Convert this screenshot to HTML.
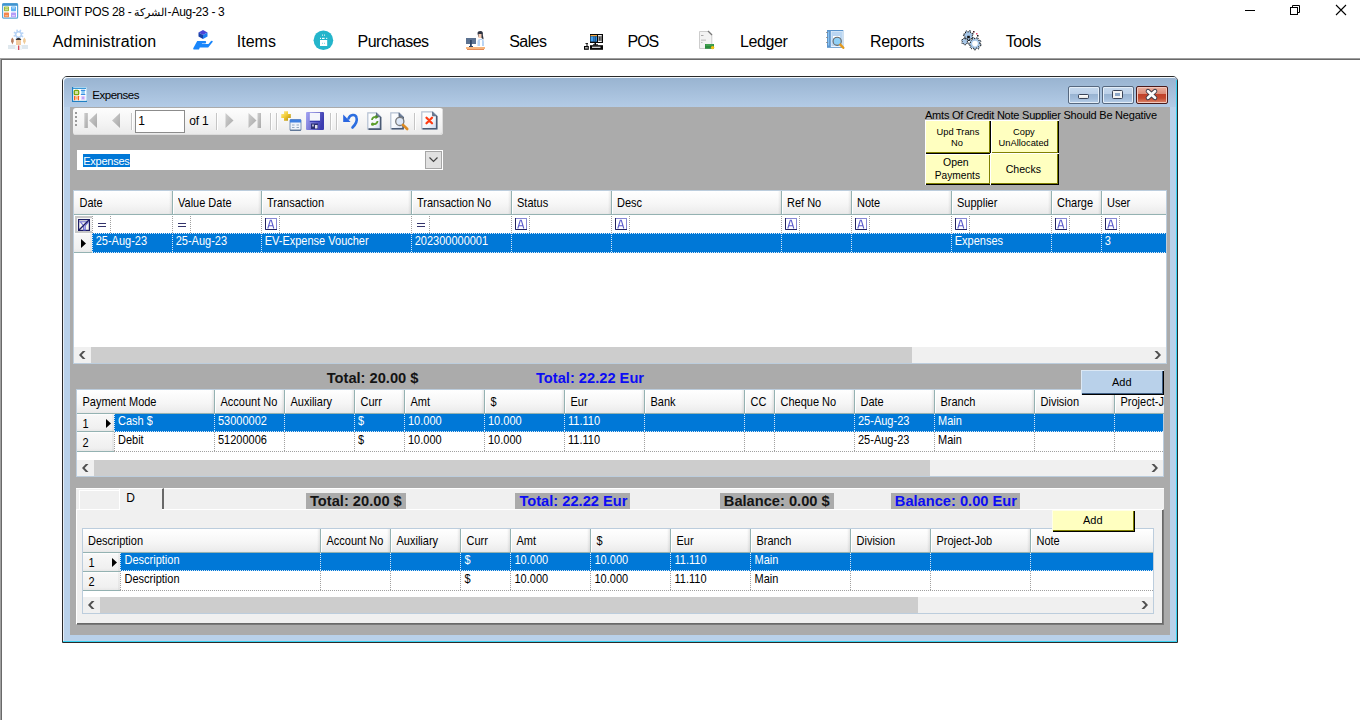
<!DOCTYPE html><html><head><meta charset="utf-8"><style>
*{margin:0;padding:0;box-sizing:border-box}
html,body{width:1360px;height:720px;overflow:hidden;background:#fff}
body{position:relative;font-family:"Liberation Sans",sans-serif;font-size:11px;color:#000}
.a{position:absolute}
.t{position:absolute;white-space:nowrap;line-height:1}
svg{position:absolute;overflow:visible}
.hd{position:absolute;background:linear-gradient(#ffffff 0%,#f7f7f7 50%,#ececec 100%);}
</style></head><body><svg style="left:2px;top:3px" width="17" height="16" viewBox="0 0 17 16">
<rect x="0.6" y="0.6" width="15" height="14.6" rx="1" fill="#fff" stroke="#5aa6d6" stroke-width="1.2"/>
<rect x="0.6" y="0.6" width="15" height="2.2" fill="#3f93d0"/>
<rect x="2" y="3.4" width="5" height="4.8" rx="0.6" fill="#9bba3c"/><rect x="3" y="4.4" width="3" height="1" fill="#d8e8a8"/><rect x="3" y="6.2" width="3" height="1" fill="#d8e8a8"/>
<rect x="9" y="3.4" width="5" height="4.8" rx="0.6" fill="#5fb2f2"/><rect x="10" y="4.4" width="3" height="1" fill="#c8e6fc"/>
<rect x="2" y="9.4" width="5" height="4.8" rx="0.6" fill="#f4854c"/><rect x="3" y="12" width="3" height="1.4" fill="#f2b888"/>
<rect x="9" y="9.4" width="5" height="4.8" rx="0.6" fill="#b49cf8"/><rect x="10" y="12" width="3" height="1.4" fill="#dccdfc"/>
</svg>
<div class="t" style="left:23px;top:6.34px;font-size:12px;letter-spacing:-0.3px;">BILLPOINT POS 28 - <span dir="rtl" style="font-size:11px">الشركة</span>-Aug-23 - 3</div>
<div class="a" style="left:1245px;top:10px;width:10px;height:1px;background:#000"></div>
<svg style="left:1289px;top:4px" width="12" height="12" viewBox="0 0 12 12">
<rect x="1.5" y="3.5" width="7" height="7" fill="none" stroke="#000"/>
<path d="M3.5 3.5 V1.5 H10.5 V8.5 H8.5" fill="none" stroke="#000"/></svg>
<svg style="left:1335px;top:4px" width="12" height="12" viewBox="0 0 12 12">
<path d="M1 1 L11 11 M11 1 L1 11" stroke="#000" stroke-width="1.1"/></svg>
<div class="t" style="left:52.8px;top:34.15px;font-size:16px;letter-spacing:0.15px;">Administration</div>
<div class="t" style="left:236.8px;top:34.15px;font-size:16px;letter-spacing:0px;">Items</div>
<div class="t" style="left:357.5px;top:34.15px;font-size:16px;letter-spacing:-0.5px;">Purchases</div>
<div class="t" style="left:509.3px;top:34.15px;font-size:16px;letter-spacing:-0.6px;">Sales</div>
<div class="t" style="left:627.5px;top:34.15px;font-size:16px;letter-spacing:-1.0px;">POS</div>
<div class="t" style="left:740px;top:34.15px;font-size:16px;letter-spacing:-0.4px;">Ledger</div>
<div class="t" style="left:869.9px;top:34.15px;font-size:16px;letter-spacing:-0.25px;">Reports</div>
<div class="t" style="left:1005.8px;top:34.15px;font-size:16px;letter-spacing:-0.5px;">Tools</div>
<svg style="left:4px;top:26px" width="30" height="28" viewBox="0 0 30 28">
<path d="M18.03,9.22 L19.44,10.12 L18.81,11.40 L17.23,10.85 L16.49,11.50 L16.84,13.14 L15.50,13.60 L14.77,12.09 L13.78,12.03 L12.88,13.44 L11.60,12.81 L12.15,11.23 L11.50,10.49 L9.86,10.84 L9.40,9.50 L10.91,8.77 L10.97,7.78 L9.56,6.88 L10.19,5.60 L11.77,6.15 L12.51,5.50 L12.16,3.86 L13.50,3.40 L14.23,4.91 L15.22,4.97 L16.12,3.56 L17.40,4.19 L16.85,5.77 L17.50,6.51 L19.14,6.16 L19.60,7.50 L18.09,8.23Z" fill="#b8d4f6"/>
<circle cx="14.5" cy="8.5" r="2" fill="#fff"/>
<path d="M11.8 13.5 Q14.5 10 17.2 13.5 V14 H11.8Z" fill="#3a3434"/>
<rect x="12" y="14" width="5" height="5" fill="#f2caa0"/>
<path d="M8.3 11.5 Q6.8 13 7 15.5 Q8 17 8.3 18.5 Q9 17 9.8 15.5 Q10.2 13 8.3 11.5Z" fill="#b98062"/>
<path d="M20.3 11.5 Q18.8 13 19 15.5 Q20 17 20.3 18.5 Q21 17 21.8 15.5 Q22.2 13 20.3 11.5Z" fill="#f1cc98"/>
<rect x="4" y="19" width="8" height="4" fill="#dfe8ee"/><rect x="17" y="19" width="7" height="4" fill="#dfe8ee"/>
<rect x="11" y="19.5" width="7" height="4.5" fill="#f2f6f8"/>
<rect x="14" y="19.5" width="1.3" height="4.5" fill="#d84a5a"/>
</svg>
<svg style="left:188px;top:26px" width="30" height="28" viewBox="0 0 30 28">
<path d="M15 4 L19.5 6.5 L15 9 L10.5 6.5Z" fill="#4a46d6"/>
<path d="M10.5 6.5 L15 9 L15 13 L10.5 10.5Z" fill="#1840a8"/>
<path d="M15 9 L19.5 6.5 L19.5 10.5 L15 13Z" fill="#1e7ef0"/>
<path d="M9.2 15 H17.6 Q18.8 15.8 17.6 17.4 H14 L13.8 18 H20.5 L23 15 Q24.6 14.3 24.8 15.8 L20.2 21.4 H11.8 L11 23.6 H5.6 Q4.8 22.6 5.4 22Z" fill="#1a86fb"/>
</svg>
<svg style="left:308px;top:26px" width="30" height="28" viewBox="0 0 30 28">
<circle cx="15.4" cy="14.2" r="9.8" fill="#24b5cb"/>
<rect x="12" y="14" width="7.2" height="6" fill="#fff"/>
<rect x="14" y="11.8" width="2.6" height="1.2" fill="#fff"/><rect x="12" y="11.8" width="1" height="1.2" fill="#fff"/><rect x="18.2" y="11.8" width="1" height="1.2" fill="#fff"/>
<rect x="14" y="8.6" width="1" height="1" fill="#fff"/><rect x="16" y="8.6" width="1" height="1" fill="#fff"/>
<rect x="14" y="16.8" width="1" height="1" fill="#7fd2de"/><rect x="16" y="16.8" width="1" height="1" fill="#7fd2de"/>
</svg>
<svg style="left:460px;top:26px" width="30" height="28" viewBox="0 0 30 28">
<rect x="6" y="12" width="10" height="6" fill="#5b7291"/>
<rect x="10" y="14" width="1.8" height="6.5" fill="#2e4566"/><rect x="9" y="20" width="4" height="1" fill="#2e4566"/>
<path d="M17.6 8 Q17 5 20.5 5 Q23.5 5.2 22.8 9 Q23.6 12 23.5 13.5 L21.5 12 Q20 11.5 18.5 11 Z" fill="#2f3442"/>
<rect x="18.5" y="8" width="3" height="4" fill="#f7cdb4"/>
<path d="M17.5 20 L17.5 15 Q18 13.2 20 13 L22 13 Q24 13.5 24 15.5 L24 20Z" fill="#b8d4f4"/>
<rect x="20" y="14" width="2" height="6" fill="#fff"/>
<rect x="6" y="21" width="19" height="2" fill="#f7b57c"/><rect x="7" y="23" width="17" height="1" fill="#e48a56"/>
</svg>
<svg style="left:578px;top:26px" width="30" height="28" viewBox="0 0 30 28">
<rect x="12" y="8" width="13" height="9" fill="#060606"/>
<rect x="12.5" y="9" width="6.5" height="1.4" fill="#f6a63a"/><rect x="12.5" y="10.4" width="6.5" height="5.2" fill="#3e9ef0"/>
<rect x="15.6" y="10.4" width="0.7" height="5.2" fill="#0a2a50"/><rect x="17.4" y="10.4" width="0.7" height="5.2" fill="#0a2a50"/>
<rect x="20" y="9" width="3.8" height="1.4" fill="#eee"/><rect x="20.3" y="10.4" width="1" height="4.5" fill="#ddd"/><rect x="22.5" y="10.4" width="1" height="4.5" fill="#ddd"/><rect x="20" y="14.8" width="3.8" height="1.2" fill="#eee"/>
<rect x="16.5" y="17" width="1.5" height="2" fill="#060606"/><rect x="15" y="18.3" width="5" height="1" fill="#060606"/>
<rect x="12" y="19.2" width="13" height="4.6" fill="#060606"/><rect x="14" y="20.6" width="8.5" height="1.4" fill="#cfcfcf"/>
<rect x="6" y="20" width="4.8" height="3.8" fill="#060606"/><rect x="7" y="21" width="2.8" height="1.6" fill="#aaa"/>
<rect x="7.5" y="17" width="2.5" height="0.9" fill="#060606"/><rect x="8.5" y="18" width="1" height="2" fill="#060606"/>
</svg>
<svg style="left:692px;top:26px" width="30" height="28" viewBox="0 0 30 28">
<path d="M7.5 5.5 H16.5 L19.8 8.5 V22.5 H7.5Z" fill="#f3f3f3" stroke="#cdcdcd" stroke-width="1"/>
<path d="M16 5 L20 9" stroke="#777" stroke-width="1.3"/>
<rect x="9" y="9" width="2.5" height="1" fill="#aaa"/><rect x="9" y="13.6" width="5" height="1" fill="#b8b8b8"/><rect x="9" y="16" width="1.5" height="1" fill="#bbb"/>
<rect x="13" y="18" width="9" height="4.8" fill="#2a8c3c"/><rect x="13.5" y="18.5" width="8" height="1" fill="#56b060"/>
<circle cx="20.6" cy="21.6" r="1.7" fill="#f5c010"/>
</svg>
<svg style="left:822px;top:26px" width="30" height="28" viewBox="0 0 30 28">
<rect x="5" y="4" width="16.3" height="17.8" fill="#5a94cc"/>
<rect x="8.8" y="5" width="12" height="16" fill="#e8f3fd"/><rect x="9.5" y="5.5" width="10.5" height="14.5" fill="#bad6f2"/>
<rect x="6" y="5.5" width="1.2" height="14" fill="#8cc2ee"/>
<rect x="4" y="6" width="2" height="0.8" fill="#888"/><rect x="4" y="11" width="2" height="0.8" fill="#888"/><rect x="4" y="16" width="2" height="0.8" fill="#888"/>
<rect x="11" y="10" width="7" height="2" fill="#fff"/>
<circle cx="15.2" cy="15.3" r="4.1" fill="#8fd0f6" stroke="#6a6a6a" stroke-width="1.1"/>
<path d="M18.3 18.6 L21.3 21.8" stroke="#e59a1e" stroke-width="2.4" stroke-linecap="round"/>
</svg>
<svg style="left:956px;top:26px" width="30" height="28" viewBox="0 0 30 28">
<path d="M15.84,10.56 L16.94,11.61 L16.06,12.90 L14.68,12.28 L13.71,12.85 L13.58,14.36 L12.02,14.49 L11.65,13.02 L10.60,12.62 L9.34,13.45 L8.27,12.31 L9.18,11.11 L8.84,10.03 L7.40,9.57 L7.62,8.02 L9.13,7.98 L9.76,7.05 L9.23,5.64 L10.58,4.84 L11.55,6.00 L12.67,5.91 L13.44,4.61 L14.90,5.17 L14.60,6.65 L15.38,7.47 L16.87,7.27 L17.34,8.76 L16.00,9.45Z" fill="#a7c7e8" stroke="#111" stroke-width="1" stroke-dasharray="1.6 0.9"/>
<rect x="11.2" y="9.8" width="2.6" height="2.4" fill="#111"/>
<path d="M11.39,15.76 L12.09,16.36 L11.56,17.49 L10.65,17.33 L9.87,17.87 L9.70,18.78 L8.46,18.88 L8.14,18.01 L7.28,17.61 L6.41,17.92 L5.70,16.90 L6.29,16.18 L6.21,15.24 L5.51,14.64 L6.04,13.51 L6.95,13.67 L7.73,13.13 L7.90,12.22 L9.14,12.12 L9.46,12.99 L10.32,13.39 L11.19,13.08 L11.90,14.10 L11.31,14.82Z" fill="#a7c7e8" stroke="#111" stroke-width="1" stroke-dasharray="1.4 0.9"/>
<path d="M23.80,17.60 L25.27,18.26 L24.92,19.75 L23.31,19.70 L22.68,20.69 L23.38,22.13 L22.15,23.06 L20.95,21.99 L19.83,22.33 L19.44,23.88 L17.91,23.80 L17.68,22.21 L16.60,21.76 L15.30,22.70 L14.17,21.65 L15.02,20.28 L14.49,19.24 L12.89,19.12 L12.70,17.60 L14.23,17.10 L14.49,15.96 L13.34,14.84 L14.17,13.55 L15.67,14.15 L16.60,13.44 L16.44,11.84 L17.91,11.40 L18.67,12.81 L19.83,12.87 L20.74,11.54 L22.15,12.14 L21.82,13.72 L22.68,14.51 L24.22,14.08 L24.92,15.45 L23.66,16.44Z" fill="#a7c7e8" stroke="#111" stroke-width="1" stroke-dasharray="1.6 1"/>
<circle cx="19" cy="17.6" r="2.8" fill="#fff"/>
<rect x="17" y="5" width="1.5" height="1.5" fill="#111"/><rect x="17.4" y="5.6" width="0.8" height="0.8" fill="#e04a6a"/>
<rect x="20" y="7" width="1.5" height="1.5" fill="#e04a6a"/><rect x="21" y="9" width="1.5" height="1.5" fill="#111"/>
</svg>
<div class="a" style="left:0px;top:58px;width:1360px;height:1px;background:#a0a0a0"></div>
<div class="a" style="left:0px;top:58px;width:1px;height:662px;background:#a0a0a0"></div>
<div class="a" style="left:1px;top:59px;width:1359px;height:1px;background:#696969"></div>
<div class="a" style="left:1px;top:59px;width:1px;height:661px;background:#696969"></div>
<div class="a" style="left:62px;top:76px;width:1116px;height:567px;background:#b9d1ea;border:1px solid #2a2a2a;border-radius:5px 5px 0 0"></div>
<div class="a" style="left:63px;top:77px;width:1114px;height:30px;background:linear-gradient(#98b3d0,#b3cbe6);border-radius:4px 4px 0 0;box-shadow:inset 1px 1px 0 #f4f8fc"></div>
<div class="a" style="left:63px;top:90px;width:1px;height:551px;background:#e6eef7"></div>
<div class="a" style="left:1176px;top:80px;width:1px;height:562px;background:#38d2f2"></div>
<div class="a" style="left:63px;top:641px;width:1114px;height:1px;background:#38d2f2"></div>
<div class="a" style="left:70px;top:107px;width:1100px;height:528px;background:#ababab"></div>
<svg style="left:72px;top:87px" width="15" height="15" viewBox="0 0 15 15">
<rect x="0" y="0" width="15" height="15" fill="#fff"/>
<rect x="14" y="0" width="1" height="15" fill="#bfe0f4"/><rect x="0" y="0" width="15" height="1" fill="#a8d4f0"/>
<rect x="0" y="0" width="1.2" height="15" fill="#1f80c4"/><rect x="0" y="13.8" width="15" height="1.2" fill="#1f80c4"/>
<rect x="1" y="1" width="13" height="1" fill="#3a98d8"/>
<rect x="2.3" y="3.3" width="4.4" height="4.4" rx="1" fill="#d4e4a0" stroke="#7aa80e" stroke-width="1.3"/>
<rect x="8.8" y="2.8" width="4.6" height="1.2" rx="0.5" fill="#3a8ee0"/><rect x="8.8" y="6.8" width="4.6" height="1.2" rx="0.5" fill="#3a8ee0"/><rect x="9.4" y="4" width="3.4" height="2.8" fill="#8ccaf6"/>
<rect x="2" y="8.8" width="1.3" height="4.4" rx="0.5" fill="#f4601e"/><rect x="5.8" y="8.8" width="1.3" height="4.4" rx="0.5" fill="#f4601e"/><rect x="3.3" y="9.4" width="2.5" height="3.2" fill="#f6b080"/>
<rect x="8.8" y="8.8" width="4.6" height="4.2" fill="#e4d8fc"/><circle cx="11.1" cy="10.9" r="1.3" fill="#c0a4f8"/>
</svg>
<div class="t" style="left:92.2px;top:90.16px;font-size:11.5px;letter-spacing:-0.45px;">Expenses</div>
<div class="a" style="left:1068px;top:86px;width:32px;height:18px;background:linear-gradient(#c6d9ee 0%,#bcd0e8 42%,#98b3d1 45%,#a3bddb 75%,#b9d0ea 100%);border:1px solid #56687f;border-radius:2px;box-shadow:inset 0 0 0 1px #e4eef8"></div>
<div class="a" style="left:1102px;top:86px;width:32px;height:18px;background:linear-gradient(#c6d9ee 0%,#bcd0e8 42%,#98b3d1 45%,#a3bddb 75%,#b9d0ea 100%);border:1px solid #56687f;border-radius:2px;box-shadow:inset 0 0 0 1px #e4eef8"></div>
<div class="a" style="left:1136px;top:86px;width:32px;height:18px;background:linear-gradient(#eab0a0 0%,#dc8c78 42%,#c0412a 45%,#c44a30 70%,#dc8a70 100%);border:1px solid #4a1a1a;border-radius:2px;box-shadow:inset 0 0 0 1px #f4c8bc"></div>
<div class="a" style="left:1078px;top:94px;width:11px;height:5px;background:linear-gradient(#fff,#e4e4e4);border:1px solid #3a4458;border-radius:1.5px"></div>
<div class="a" style="left:1112px;top:90px;width:11px;height:9px;background:#f4f4f4;border:1px solid #3a4458;border-radius:1.5px"></div>
<div class="a" style="left:1115px;top:93px;width:5px;height:3px;background:#8ea8c8"></div>
<svg style="left:1145px;top:89px" width="13" height="11" viewBox="0 0 13 11">
<path d="M3 2.2 L10 8.8 M10 2.2 L3 8.8" stroke="#3a3a48" stroke-width="4.6" stroke-linecap="round"/>
<path d="M3 2.2 L10 8.8 M10 2.2 L3 8.8" stroke="#fbfbfb" stroke-width="2.8" stroke-linecap="round"/></svg>
<div class="a" style="left:73px;top:108px;width:370px;height:27px;background:linear-gradient(#fdfdfd,#f3f3f3 60%,#e9e9e9);border-radius:3px;box-shadow:inset -1px -1px 0 #dcdcdc"></div>
<div class="a" style="left:75px;top:112px;width:2px;height:2px;background:#9a9a9a"></div>
<div class="a" style="left:75px;top:116px;width:2px;height:2px;background:#9a9a9a"></div>
<div class="a" style="left:75px;top:120px;width:2px;height:2px;background:#9a9a9a"></div>
<div class="a" style="left:75px;top:124px;width:2px;height:2px;background:#9a9a9a"></div>
<div class="a" style="left:131px;top:113px;width:1px;height:17px;background:#c5c5c5;box-shadow:1px 0 0 #fff"></div>
<div class="a" style="left:216px;top:113px;width:1px;height:17px;background:#c5c5c5;box-shadow:1px 0 0 #fff"></div>
<div class="a" style="left:270px;top:113px;width:1px;height:17px;background:#c5c5c5;box-shadow:1px 0 0 #fff"></div>
<div class="a" style="left:276px;top:113px;width:1px;height:17px;background:#c5c5c5;box-shadow:1px 0 0 #fff"></div>
<div class="a" style="left:330px;top:113px;width:1px;height:17px;background:#c5c5c5;box-shadow:1px 0 0 #fff"></div>
<div class="a" style="left:336px;top:113px;width:1px;height:17px;background:#c5c5c5;box-shadow:1px 0 0 #fff"></div>
<div class="a" style="left:414px;top:113px;width:1px;height:17px;background:#c5c5c5;box-shadow:1px 0 0 #fff"></div>
<svg style="left:84px;top:113px" width="14" height="15" viewBox="0 0 14 15">
<defs><linearGradient id="ng" x1="0" y1="0" x2="1" y2="1"><stop offset="0" stop-color="#cfcfcf"/><stop offset="1" stop-color="#a8a8a8"/></linearGradient></defs>
<rect x="0.3" y="0" width="3.5" height="15" fill="url(#ng)"/><path d="M13 0 V15 L5 7.5Z" fill="url(#ng)"/></svg>
<svg style="left:112px;top:113px" width="9" height="15" viewBox="0 0 9 15"><path d="M8 0 V15 L0 7.5Z" fill="url(#ng)"/></svg>
<svg style="left:225px;top:113px" width="9" height="15" viewBox="0 0 9 15"><path d="M0.5 0 V15 L8.5 7.5Z" fill="url(#ng)"/></svg>
<svg style="left:248px;top:113px" width="14" height="15" viewBox="0 0 14 15">
<rect x="9.5" y="0" width="3.5" height="15" fill="url(#ng)"/><path d="M0.5 0 V15 L8.5 7.5Z" fill="url(#ng)"/></svg>
<div class="a" style="left:135px;top:110px;width:50px;height:23px;background:#fff;border:1px solid #8c8c8c"></div>
<div class="t" style="left:138.2px;top:115.04px;font-size:12px;">1</div>
<div class="t" style="left:189.3px;top:115.04px;font-size:12px;letter-spacing:-0.2px;">of 1</div>
<svg style="left:281px;top:111px" width="20" height="20" viewBox="0 0 20 20">
<defs><linearGradient id="gd" x1="0" y1="0" x2="1" y2="1"><stop offset="0" stop-color="#fff3a0"/><stop offset="0.5" stop-color="#f0c830"/><stop offset="1" stop-color="#a88410"/></linearGradient>
<linearGradient id="fl" x1="0" y1="0" x2="1" y2="0.3"><stop offset="0" stop-color="#a8a8f4"/><stop offset="1" stop-color="#3c3cb0"/></linearGradient></defs>
<path d="M3 0.2 H7 V3 H9.8 V7 H7 V9.8 H3 V7 H0.2 V3 H3Z" fill="url(#gd)"/>
<rect x="9" y="8.5" width="11" height="11" rx="0.8" fill="#eef3fa" stroke="#5d7ba6" stroke-width="0.8"/>
<rect x="9" y="8.5" width="11" height="3" fill="#3f7fe0"/>
<path d="M11 14 H13.5 M15.5 14 H18 M11 16.5 H13.5 M15.5 16.5 H18" stroke="#8aa0bc" stroke-width="0.9"/>
<rect x="9" y="18.6" width="11" height="1" fill="#4e6684"/></svg>
<svg style="left:306px;top:112px" width="18" height="18" viewBox="0 0 18 18">
<rect x="0" y="0" width="18" height="18" rx="1" fill="url(#fl)"/><rect x="3.8" y="0.8" width="10.2" height="8" fill="#f4f6fb"/>
<rect x="3.8" y="8.8" width="10.2" height="1" fill="#2a30a8"/>
<rect x="5" y="11.5" width="7" height="5.5" fill="#2a2e70"/><rect x="9" y="13" width="2.5" height="3.5" fill="#e0e0f0"/><rect x="6" y="12.5" width="2" height="2" fill="#b0b0c8"/></svg>
<svg style="left:0;top:0" width="0" height="0"><defs><linearGradient id="dg" x1="0" y1="0" x2="1" y2="1"><stop offset="0" stop-color="#ffffff"/><stop offset="0.6" stop-color="#f4f7fc"/><stop offset="1" stop-color="#c8d4ee"/></linearGradient></defs></svg>
<svg style="left:343px;top:112px" width="16" height="17" viewBox="0 0 16 17">
<path d="M5.5 6.5 C7 2.5 12.5 1.5 13.5 5.5 C14.5 9 12 13 9.5 15.5" fill="none" stroke="#2c6ee0" stroke-width="2.6" stroke-linecap="round"/>
<path d="M0.2 2.6 L0.2 10 L7.6 10Z" fill="#2a66e0"/></svg>
<svg style="left:367px;top:112px" width="15" height="18" viewBox="0 0 15 18"><path d="M0.8 0.8 H9.5 L13.7 4.8 V17.2 H0.8Z" fill="url(#dg)" stroke="#b4c0d2" stroke-width="1.2"/><path d="M13.6 5 V17.1 H1.5" fill="none" stroke="#4a5a74" stroke-width="1.6"/><path d="M9.5 0.8 V4.8 H13.7" fill="#6c7c96" stroke="#4a5a74" stroke-width="0.8"/>
<path d="M5 8 C5 5.5 7.5 4.5 9.5 5" fill="none" stroke="#5c9e2c" stroke-width="1.8"/><path d="M8.5 2.8 L11.5 5 L8.5 7.2Z" fill="#4e8e22"/>
<path d="M10.5 9 C10.5 11.5 8 12.5 6 12" fill="none" stroke="#5c9e2c" stroke-width="1.8"/><circle cx="5.6" cy="12.2" r="1.6" fill="#5c9e2c"/></svg>
<svg style="left:390px;top:112px" width="19" height="19" viewBox="0 0 19 19"><path d="M0.8 0.8 H9 L13.2 4.8 V16.8 H0.8Z" fill="url(#dg)" stroke="#b4c0d2" stroke-width="1.2"/><path d="M13.1 5 V16.700000000000003 H1.5" fill="none" stroke="#4a5a74" stroke-width="1.6"/><path d="M9 0.8 V4.8 H13.2" fill="#6c7c96" stroke="#4a5a74" stroke-width="0.8"/>
<circle cx="9.8" cy="9.4" r="4.1" fill="#dde8f8" stroke="#7a7a7a" stroke-width="1.3"/>
<path d="M13 12.8 L17.2 17" stroke="#dc8a24" stroke-width="2.6" stroke-linecap="round"/></svg>
<svg style="left:421px;top:111px" width="17" height="19" viewBox="0 0 17 19"><path d="M0.8 0.8 H11.600000000000001 L15.8 4.8 V17.8 H0.8Z" fill="url(#dg)" stroke="#b4c0d2" stroke-width="1.2"/><path d="M15.700000000000001 5 V17.700000000000003 H1.5" fill="none" stroke="#4a5a74" stroke-width="1.6"/><path d="M11.600000000000001 0.8 V4.8 H15.8" fill="#6c7c96" stroke="#4a5a74" stroke-width="0.8"/>
<path d="M5.5 6.8 L11 12.2 M11 6.8 L5.5 12.2" stroke="#ff3c14" stroke-width="2.3" stroke-linecap="round"/></svg>
<div class="t" style="left:925px;top:110.09px;font-size:11px;letter-spacing:-0.22px;">Amts Of Credit Note Supplier Should Be Negative</div>
<div class="a" style="left:925px;top:154px;width:66px;height:31px;background:#ffffc0;box-shadow:inset 1px 1px 0 #ffffff, inset -1px -1px 0 #000, inset -2px -2px 0 #808000"></div>
<div class="a" style="left:925px;top:120px;width:66px;height:34px;background:#ffffc0;box-shadow:inset 1px 1px 0 #ffffff, inset -1px -1px 0 #000, inset -2px -2px 0 #808000"></div>
<div class="a" style="left:991px;top:120px;width:68px;height:34px;background:#ffffc0;box-shadow:inset 1px 1px 0 #ffffff, inset -1px -1px 0 #000, inset -2px -2px 0 #808000"></div>
<div class="a" style="left:990px;top:153px;width:69px;height:32px;background:#ffffc0;box-shadow:inset 1px 1px 0 #ffffff, inset -1px -1px 0 #000, inset -2px -2px 0 #808000"></div>
<div class="t" style="left:936.5px;top:127.63px;font-size:9.3px;">Upd Trans</div>
<div class="t" style="left:951px;top:139.13px;font-size:9.3px;">No</div>
<div class="t" style="left:1013px;top:127.63px;font-size:9.3px;">Copy</div>
<div class="t" style="left:998.6px;top:139.13px;font-size:9.3px;">UnAllocated</div>
<div class="t" style="left:943px;top:156.61px;font-size:10.5px;">Open</div>
<div class="t" style="left:934.7px;top:170.86px;font-size:10.2px;">Payments</div>
<div class="t" style="left:1005.7px;top:163.72px;font-size:10.6px;">Checks</div>
<div class="a" style="left:77px;top:150px;width:366px;height:20px;background:#fff"></div>
<div class="a" style="left:83px;top:154px;width:47px;height:13px;background:#0078d7"></div>
<div class="t" style="left:83.2px;top:155.99px;font-size:11px;color:#fff;letter-spacing:-0.25px;">Expenses</div>
<div class="a" style="left:425px;top:151px;width:17px;height:18px;background:#e1e1e1;border:1px solid #a6a6a6"></div>
<svg style="left:429px;top:157px" width="9" height="6" viewBox="0 0 9 6"><path d="M0.5 0.5 L4.5 4.5 L8.5 0.5" fill="none" stroke="#444" stroke-width="1.2"/></svg>
<div class="a" style="left:73px;top:190px;width:1094px;height:174px;background:#fff;border:1px solid #bccddd"></div>
<div class="a" style="left:74px;top:191px;width:1092px;height:24px;overflow:hidden;background:linear-gradient(#ffffff 0%,#f6f6f6 55%,#ececec 90%,#e2e2e2 100%);box-shadow:inset 0 -1px 0 #94b2b2">
<div class="a" style="left:95px;top:0;width:3px;height:23px;background:linear-gradient(90deg,rgba(0,0,0,0),rgba(0,0,0,0.09))"></div>
<div class="a" style="left:98px;top:0;width:1px;height:23px;background:#94b2b2"></div>
<div class="a" style="left:99px;top:0;width:1px;height:23px;background:#fff"></div>
<div class="a" style="left:184px;top:0;width:3px;height:23px;background:linear-gradient(90deg,rgba(0,0,0,0),rgba(0,0,0,0.09))"></div>
<div class="a" style="left:187px;top:0;width:1px;height:23px;background:#94b2b2"></div>
<div class="a" style="left:188px;top:0;width:1px;height:23px;background:#fff"></div>
<div class="a" style="left:334px;top:0;width:3px;height:23px;background:linear-gradient(90deg,rgba(0,0,0,0),rgba(0,0,0,0.09))"></div>
<div class="a" style="left:337px;top:0;width:1px;height:23px;background:#94b2b2"></div>
<div class="a" style="left:338px;top:0;width:1px;height:23px;background:#fff"></div>
<div class="a" style="left:434px;top:0;width:3px;height:23px;background:linear-gradient(90deg,rgba(0,0,0,0),rgba(0,0,0,0.09))"></div>
<div class="a" style="left:437px;top:0;width:1px;height:23px;background:#94b2b2"></div>
<div class="a" style="left:438px;top:0;width:1px;height:23px;background:#fff"></div>
<div class="a" style="left:534px;top:0;width:3px;height:23px;background:linear-gradient(90deg,rgba(0,0,0,0),rgba(0,0,0,0.09))"></div>
<div class="a" style="left:537px;top:0;width:1px;height:23px;background:#94b2b2"></div>
<div class="a" style="left:538px;top:0;width:1px;height:23px;background:#fff"></div>
<div class="a" style="left:704px;top:0;width:3px;height:23px;background:linear-gradient(90deg,rgba(0,0,0,0),rgba(0,0,0,0.09))"></div>
<div class="a" style="left:707px;top:0;width:1px;height:23px;background:#94b2b2"></div>
<div class="a" style="left:708px;top:0;width:1px;height:23px;background:#fff"></div>
<div class="a" style="left:774px;top:0;width:3px;height:23px;background:linear-gradient(90deg,rgba(0,0,0,0),rgba(0,0,0,0.09))"></div>
<div class="a" style="left:777px;top:0;width:1px;height:23px;background:#94b2b2"></div>
<div class="a" style="left:778px;top:0;width:1px;height:23px;background:#fff"></div>
<div class="a" style="left:874px;top:0;width:3px;height:23px;background:linear-gradient(90deg,rgba(0,0,0,0),rgba(0,0,0,0.09))"></div>
<div class="a" style="left:877px;top:0;width:1px;height:23px;background:#94b2b2"></div>
<div class="a" style="left:878px;top:0;width:1px;height:23px;background:#fff"></div>
<div class="a" style="left:974px;top:0;width:3px;height:23px;background:linear-gradient(90deg,rgba(0,0,0,0),rgba(0,0,0,0.09))"></div>
<div class="a" style="left:977px;top:0;width:1px;height:23px;background:#94b2b2"></div>
<div class="a" style="left:978px;top:0;width:1px;height:23px;background:#fff"></div>
<div class="a" style="left:1024px;top:0;width:3px;height:23px;background:linear-gradient(90deg,rgba(0,0,0,0),rgba(0,0,0,0.09))"></div>
<div class="a" style="left:1027px;top:0;width:1px;height:23px;background:#94b2b2"></div>
<div class="a" style="left:1028px;top:0;width:1px;height:23px;background:#fff"></div>
<div class="a" style="left:0px;top:0;width:98px;height:24px;overflow:hidden"><div class="t" style="left:5.5px;top:6.69px;font-size:11px;transform:scaleY(1.1);transform-origin:0 9.31px">Date</div></div>
<div class="a" style="left:99px;top:0;width:88px;height:24px;overflow:hidden"><div class="t" style="left:5px;top:6.69px;font-size:11px;transform:scaleY(1.1);transform-origin:0 9.31px">Value Date</div></div>
<div class="a" style="left:188px;top:0;width:149px;height:24px;overflow:hidden"><div class="t" style="left:5px;top:6.69px;font-size:11px;transform:scaleY(1.1);transform-origin:0 9.31px">Transaction</div></div>
<div class="a" style="left:338px;top:0;width:99px;height:24px;overflow:hidden"><div class="t" style="left:5px;top:6.69px;font-size:11px;transform:scaleY(1.1);transform-origin:0 9.31px">Transaction No</div></div>
<div class="a" style="left:438px;top:0;width:99px;height:24px;overflow:hidden"><div class="t" style="left:5px;top:6.69px;font-size:11px;transform:scaleY(1.1);transform-origin:0 9.31px">Status</div></div>
<div class="a" style="left:538px;top:0;width:169px;height:24px;overflow:hidden"><div class="t" style="left:5px;top:6.69px;font-size:11px;transform:scaleY(1.1);transform-origin:0 9.31px">Desc</div></div>
<div class="a" style="left:708px;top:0;width:69px;height:24px;overflow:hidden"><div class="t" style="left:5px;top:6.69px;font-size:11px;transform:scaleY(1.1);transform-origin:0 9.31px">Ref No</div></div>
<div class="a" style="left:778px;top:0;width:99px;height:24px;overflow:hidden"><div class="t" style="left:5px;top:6.69px;font-size:11px;transform:scaleY(1.1);transform-origin:0 9.31px">Note</div></div>
<div class="a" style="left:878px;top:0;width:99px;height:24px;overflow:hidden"><div class="t" style="left:5px;top:6.69px;font-size:11px;transform:scaleY(1.1);transform-origin:0 9.31px">Supplier</div></div>
<div class="a" style="left:978px;top:0;width:49px;height:24px;overflow:hidden"><div class="t" style="left:5px;top:6.69px;font-size:11px;transform:scaleY(1.1);transform-origin:0 9.31px">Charge</div></div>
<div class="a" style="left:1028px;top:0;width:64px;height:24px;overflow:hidden"><div class="t" style="left:5px;top:6.69px;font-size:11px;transform:scaleY(1.1);transform-origin:0 9.31px">User</div></div>
</div>
<div class="a" style="left:75px;top:216px;width:17px;height:17px;background:linear-gradient(#f6f6f6,#ececec);border:2px solid #c8c8c8;border-right:none"></div>
<svg style="left:78px;top:219px" width="12" height="12" viewBox="0 0 12 12">
<rect x="0.6" y="0.6" width="10.8" height="10.8" fill="#f6f6ee" stroke="#1e1e64" stroke-width="1.2"/>
<path d="M1.2 2.8 H10.8" stroke="#6a6ad8" stroke-width="1"/>
<path d="M2.5 3.2 L5.6 6.6 V11 H7.2 V6.6 L10.2 3.2" fill="none" stroke="#6a6ad8" stroke-width="1.1"/>
<path d="M0.8 11.2 L11.2 0.8" stroke="#1e1e64" stroke-width="1.3"/></svg>
<div class="a" style="left:92px;top:216px;width:1px;height:17px;background:repeating-linear-gradient(#a0a0a0 0 1px,transparent 1px 2px);background-position:0 0px"></div>
<div class="a" style="left:98px;top:223px;width:8px;height:1px;background:#33336b"></div>
<div class="a" style="left:98px;top:226px;width:8px;height:1px;background:#33336b"></div>
<div class="a" style="left:110px;top:216px;width:1px;height:17px;background:repeating-linear-gradient(#a0a0a0 0 1px,transparent 1px 2px);background-position:0 0px"></div>
<div class="a" style="left:172px;top:216px;width:1px;height:17px;background:repeating-linear-gradient(#a0a0a0 0 1px,transparent 1px 2px);background-position:0 0px"></div>
<div class="a" style="left:178px;top:223px;width:8px;height:1px;background:#33336b"></div>
<div class="a" style="left:178px;top:226px;width:8px;height:1px;background:#33336b"></div>
<div class="a" style="left:190px;top:216px;width:1px;height:17px;background:repeating-linear-gradient(#a0a0a0 0 1px,transparent 1px 2px);background-position:0 0px"></div>
<div class="a" style="left:261px;top:216px;width:1px;height:17px;background:repeating-linear-gradient(#a0a0a0 0 1px,transparent 1px 2px);background-position:0 0px"></div>
<svg style="left:265px;top:218px" width="12" height="12" viewBox="0 0 12 12"><rect x="0.5" y="0.5" width="11" height="11" fill="#fff" stroke="#8888d4"/><path d="M0.5 0 V11.5 H12" fill="none" stroke="#22225e"/><path d="M2.8 10.5 L5.3 2.2 H6.3 L8.8 10.5 M3.8 7.8 H7.8" fill="none" stroke="#5a5acc" stroke-width="1.1"/></svg>
<div class="a" style="left:279px;top:216px;width:1px;height:17px;background:repeating-linear-gradient(#a0a0a0 0 1px,transparent 1px 2px);background-position:0 0px"></div>
<div class="a" style="left:411px;top:216px;width:1px;height:17px;background:repeating-linear-gradient(#a0a0a0 0 1px,transparent 1px 2px);background-position:0 0px"></div>
<div class="a" style="left:417px;top:223px;width:8px;height:1px;background:#33336b"></div>
<div class="a" style="left:417px;top:226px;width:8px;height:1px;background:#33336b"></div>
<div class="a" style="left:429px;top:216px;width:1px;height:17px;background:repeating-linear-gradient(#a0a0a0 0 1px,transparent 1px 2px);background-position:0 0px"></div>
<div class="a" style="left:511px;top:216px;width:1px;height:17px;background:repeating-linear-gradient(#a0a0a0 0 1px,transparent 1px 2px);background-position:0 0px"></div>
<svg style="left:515px;top:218px" width="12" height="12" viewBox="0 0 12 12"><rect x="0.5" y="0.5" width="11" height="11" fill="#fff" stroke="#8888d4"/><path d="M0.5 0 V11.5 H12" fill="none" stroke="#22225e"/><path d="M2.8 10.5 L5.3 2.2 H6.3 L8.8 10.5 M3.8 7.8 H7.8" fill="none" stroke="#5a5acc" stroke-width="1.1"/></svg>
<div class="a" style="left:529px;top:216px;width:1px;height:17px;background:repeating-linear-gradient(#a0a0a0 0 1px,transparent 1px 2px);background-position:0 0px"></div>
<div class="a" style="left:611px;top:216px;width:1px;height:17px;background:repeating-linear-gradient(#a0a0a0 0 1px,transparent 1px 2px);background-position:0 0px"></div>
<svg style="left:615px;top:218px" width="12" height="12" viewBox="0 0 12 12"><rect x="0.5" y="0.5" width="11" height="11" fill="#fff" stroke="#8888d4"/><path d="M0.5 0 V11.5 H12" fill="none" stroke="#22225e"/><path d="M2.8 10.5 L5.3 2.2 H6.3 L8.8 10.5 M3.8 7.8 H7.8" fill="none" stroke="#5a5acc" stroke-width="1.1"/></svg>
<div class="a" style="left:629px;top:216px;width:1px;height:17px;background:repeating-linear-gradient(#a0a0a0 0 1px,transparent 1px 2px);background-position:0 0px"></div>
<div class="a" style="left:781px;top:216px;width:1px;height:17px;background:repeating-linear-gradient(#a0a0a0 0 1px,transparent 1px 2px);background-position:0 0px"></div>
<svg style="left:785px;top:218px" width="12" height="12" viewBox="0 0 12 12"><rect x="0.5" y="0.5" width="11" height="11" fill="#fff" stroke="#8888d4"/><path d="M0.5 0 V11.5 H12" fill="none" stroke="#22225e"/><path d="M2.8 10.5 L5.3 2.2 H6.3 L8.8 10.5 M3.8 7.8 H7.8" fill="none" stroke="#5a5acc" stroke-width="1.1"/></svg>
<div class="a" style="left:799px;top:216px;width:1px;height:17px;background:repeating-linear-gradient(#a0a0a0 0 1px,transparent 1px 2px);background-position:0 0px"></div>
<div class="a" style="left:851px;top:216px;width:1px;height:17px;background:repeating-linear-gradient(#a0a0a0 0 1px,transparent 1px 2px);background-position:0 0px"></div>
<svg style="left:855px;top:218px" width="12" height="12" viewBox="0 0 12 12"><rect x="0.5" y="0.5" width="11" height="11" fill="#fff" stroke="#8888d4"/><path d="M0.5 0 V11.5 H12" fill="none" stroke="#22225e"/><path d="M2.8 10.5 L5.3 2.2 H6.3 L8.8 10.5 M3.8 7.8 H7.8" fill="none" stroke="#5a5acc" stroke-width="1.1"/></svg>
<div class="a" style="left:869px;top:216px;width:1px;height:17px;background:repeating-linear-gradient(#a0a0a0 0 1px,transparent 1px 2px);background-position:0 0px"></div>
<div class="a" style="left:951px;top:216px;width:1px;height:17px;background:repeating-linear-gradient(#a0a0a0 0 1px,transparent 1px 2px);background-position:0 0px"></div>
<svg style="left:955px;top:218px" width="12" height="12" viewBox="0 0 12 12"><rect x="0.5" y="0.5" width="11" height="11" fill="#fff" stroke="#8888d4"/><path d="M0.5 0 V11.5 H12" fill="none" stroke="#22225e"/><path d="M2.8 10.5 L5.3 2.2 H6.3 L8.8 10.5 M3.8 7.8 H7.8" fill="none" stroke="#5a5acc" stroke-width="1.1"/></svg>
<div class="a" style="left:969px;top:216px;width:1px;height:17px;background:repeating-linear-gradient(#a0a0a0 0 1px,transparent 1px 2px);background-position:0 0px"></div>
<div class="a" style="left:1051px;top:216px;width:1px;height:17px;background:repeating-linear-gradient(#a0a0a0 0 1px,transparent 1px 2px);background-position:0 0px"></div>
<svg style="left:1055px;top:218px" width="12" height="12" viewBox="0 0 12 12"><rect x="0.5" y="0.5" width="11" height="11" fill="#fff" stroke="#8888d4"/><path d="M0.5 0 V11.5 H12" fill="none" stroke="#22225e"/><path d="M2.8 10.5 L5.3 2.2 H6.3 L8.8 10.5 M3.8 7.8 H7.8" fill="none" stroke="#5a5acc" stroke-width="1.1"/></svg>
<div class="a" style="left:1069px;top:216px;width:1px;height:17px;background:repeating-linear-gradient(#a0a0a0 0 1px,transparent 1px 2px);background-position:0 0px"></div>
<div class="a" style="left:1101px;top:216px;width:1px;height:17px;background:repeating-linear-gradient(#a0a0a0 0 1px,transparent 1px 2px);background-position:0 0px"></div>
<svg style="left:1105px;top:218px" width="12" height="12" viewBox="0 0 12 12"><rect x="0.5" y="0.5" width="11" height="11" fill="#fff" stroke="#8888d4"/><path d="M0.5 0 V11.5 H12" fill="none" stroke="#22225e"/><path d="M2.8 10.5 L5.3 2.2 H6.3 L8.8 10.5 M3.8 7.8 H7.8" fill="none" stroke="#5a5acc" stroke-width="1.1"/></svg>
<div class="a" style="left:1119px;top:216px;width:1px;height:17px;background:repeating-linear-gradient(#a0a0a0 0 1px,transparent 1px 2px);background-position:0 0px"></div>
<div class="a" style="left:74px;top:233px;width:18px;height:20px;background:linear-gradient(#ffffff 0%,#f7f7f7 10%,#f0f0f0 80%,#e4e4e4 100%);box-shadow:inset 0 -1px 0 #94b2b2, inset -2px 0 0 rgba(0,0,0,0.04)"></div>
<div class="a" style="left:92px;top:233px;width:1074px;height:20px;background:#0078d7"></div>
<div class="a" style="left:92px;top:233px;width:1074px;height:1px;background:repeating-linear-gradient(90deg,#d8e8f8 0 1px,transparent 1px 2px)"></div>
<div class="a" style="left:92px;top:252px;width:1074px;height:1px;background:repeating-linear-gradient(90deg,#d8e8f8 0 1px,transparent 1px 2px)"></div>
<div class="a" style="left:92px;top:233px;width:1px;height:20px;background:repeating-linear-gradient(#d8e8f8 0 1px,transparent 1px 2px);background-position:0 0px"></div>
<div class="a" style="left:172px;top:233px;width:1px;height:20px;background:repeating-linear-gradient(#d8e8f8 0 1px,transparent 1px 2px);background-position:0 0px"></div>
<div class="a" style="left:261px;top:233px;width:1px;height:20px;background:repeating-linear-gradient(#d8e8f8 0 1px,transparent 1px 2px);background-position:0 0px"></div>
<div class="a" style="left:411px;top:233px;width:1px;height:20px;background:repeating-linear-gradient(#d8e8f8 0 1px,transparent 1px 2px);background-position:0 0px"></div>
<div class="a" style="left:511px;top:233px;width:1px;height:20px;background:repeating-linear-gradient(#d8e8f8 0 1px,transparent 1px 2px);background-position:0 0px"></div>
<div class="a" style="left:611px;top:233px;width:1px;height:20px;background:repeating-linear-gradient(#d8e8f8 0 1px,transparent 1px 2px);background-position:0 0px"></div>
<div class="a" style="left:781px;top:233px;width:1px;height:20px;background:repeating-linear-gradient(#d8e8f8 0 1px,transparent 1px 2px);background-position:0 0px"></div>
<div class="a" style="left:851px;top:233px;width:1px;height:20px;background:repeating-linear-gradient(#d8e8f8 0 1px,transparent 1px 2px);background-position:0 0px"></div>
<div class="a" style="left:951px;top:233px;width:1px;height:20px;background:repeating-linear-gradient(#d8e8f8 0 1px,transparent 1px 2px);background-position:0 0px"></div>
<div class="a" style="left:1051px;top:233px;width:1px;height:20px;background:repeating-linear-gradient(#d8e8f8 0 1px,transparent 1px 2px);background-position:0 0px"></div>
<div class="a" style="left:1101px;top:233px;width:1px;height:20px;background:repeating-linear-gradient(#d8e8f8 0 1px,transparent 1px 2px);background-position:0 0px"></div>
<svg style="left:81px;top:239px" width="5" height="9" viewBox="0 0 5 9"><path d="M0 0 L5 4.5 L0 9Z" fill="#000"/></svg>
<div class="t" style="left:95.7px;top:236.19px;font-size:11px;transform:scaleY(1.1);transform-origin:0 9.31px;color:#fff;">25-Aug-23</div>
<div class="t" style="left:175.7px;top:236.19px;font-size:11px;transform:scaleY(1.1);transform-origin:0 9.31px;color:#fff;">25-Aug-23</div>
<div class="t" style="left:264.7px;top:236.19px;font-size:11px;transform:scaleY(1.1);transform-origin:0 9.31px;color:#fff;">EV-Expense Voucher</div>
<div class="t" style="left:414.7px;top:236.19px;font-size:11px;transform:scaleY(1.1);transform-origin:0 9.31px;color:#fff;">202300000001</div>
<div class="t" style="left:954.7px;top:236.19px;font-size:11px;transform:scaleY(1.1);transform-origin:0 9.31px;color:#fff;">Expenses</div>
<div class="t" style="left:1104.7px;top:236.19px;font-size:11px;transform:scaleY(1.1);transform-origin:0 9.31px;color:#fff;">3</div>
<div class="a" style="left:74px;top:347px;width:1092px;height:16px;background:#f0f0f0"></div>
<div class="a" style="left:91px;top:347px;width:821px;height:16px;background:#cdcdcd"></div>
<svg style="left:79px;top:351px" width="7" height="8" viewBox="0 0 7 8"><path d="M6.5 0 H3.8 L0 4 L3.8 8 H6.5 L2.7 4Z" fill="#505050"/></svg>
<svg style="left:1154px;top:351px" width="7" height="8" viewBox="0 0 7 8"><path d="M0.5 0 H3.2 L7 4 L3.2 8 H0.5 L4.3 4Z" fill="#505050"/></svg>
<div class="t" style="left:326.7px;top:370.58px;font-size:14.67px;color:#141414;font-weight:bold;">Total: 20.00 $</div>
<div class="t" style="left:536px;top:370.58px;font-size:14.67px;color:#0c0cf4;font-weight:bold;">Total: 22.22 Eur</div>
<div class="a" style="left:76px;top:389px;width:1088px;height:88px;background:#fff;border:1px solid #bccddd"></div>
<div class="a" style="left:77px;top:390px;width:1087px;height:24px;overflow:hidden;background:linear-gradient(#ffffff 0%,#f6f6f6 55%,#ececec 90%,#e2e2e2 100%);box-shadow:inset 0 -1px 0 #94b2b2">
<div class="a" style="left:134px;top:0;width:3px;height:23px;background:linear-gradient(90deg,rgba(0,0,0,0),rgba(0,0,0,0.09))"></div>
<div class="a" style="left:137px;top:0;width:1px;height:23px;background:#94b2b2"></div>
<div class="a" style="left:138px;top:0;width:1px;height:23px;background:#fff"></div>
<div class="a" style="left:204px;top:0;width:3px;height:23px;background:linear-gradient(90deg,rgba(0,0,0,0),rgba(0,0,0,0.09))"></div>
<div class="a" style="left:207px;top:0;width:1px;height:23px;background:#94b2b2"></div>
<div class="a" style="left:208px;top:0;width:1px;height:23px;background:#fff"></div>
<div class="a" style="left:274px;top:0;width:3px;height:23px;background:linear-gradient(90deg,rgba(0,0,0,0),rgba(0,0,0,0.09))"></div>
<div class="a" style="left:277px;top:0;width:1px;height:23px;background:#94b2b2"></div>
<div class="a" style="left:278px;top:0;width:1px;height:23px;background:#fff"></div>
<div class="a" style="left:324px;top:0;width:3px;height:23px;background:linear-gradient(90deg,rgba(0,0,0,0),rgba(0,0,0,0.09))"></div>
<div class="a" style="left:327px;top:0;width:1px;height:23px;background:#94b2b2"></div>
<div class="a" style="left:328px;top:0;width:1px;height:23px;background:#fff"></div>
<div class="a" style="left:404px;top:0;width:3px;height:23px;background:linear-gradient(90deg,rgba(0,0,0,0),rgba(0,0,0,0.09))"></div>
<div class="a" style="left:407px;top:0;width:1px;height:23px;background:#94b2b2"></div>
<div class="a" style="left:408px;top:0;width:1px;height:23px;background:#fff"></div>
<div class="a" style="left:484px;top:0;width:3px;height:23px;background:linear-gradient(90deg,rgba(0,0,0,0),rgba(0,0,0,0.09))"></div>
<div class="a" style="left:487px;top:0;width:1px;height:23px;background:#94b2b2"></div>
<div class="a" style="left:488px;top:0;width:1px;height:23px;background:#fff"></div>
<div class="a" style="left:564px;top:0;width:3px;height:23px;background:linear-gradient(90deg,rgba(0,0,0,0),rgba(0,0,0,0.09))"></div>
<div class="a" style="left:567px;top:0;width:1px;height:23px;background:#94b2b2"></div>
<div class="a" style="left:568px;top:0;width:1px;height:23px;background:#fff"></div>
<div class="a" style="left:664px;top:0;width:3px;height:23px;background:linear-gradient(90deg,rgba(0,0,0,0),rgba(0,0,0,0.09))"></div>
<div class="a" style="left:667px;top:0;width:1px;height:23px;background:#94b2b2"></div>
<div class="a" style="left:668px;top:0;width:1px;height:23px;background:#fff"></div>
<div class="a" style="left:694px;top:0;width:3px;height:23px;background:linear-gradient(90deg,rgba(0,0,0,0),rgba(0,0,0,0.09))"></div>
<div class="a" style="left:697px;top:0;width:1px;height:23px;background:#94b2b2"></div>
<div class="a" style="left:698px;top:0;width:1px;height:23px;background:#fff"></div>
<div class="a" style="left:774px;top:0;width:3px;height:23px;background:linear-gradient(90deg,rgba(0,0,0,0),rgba(0,0,0,0.09))"></div>
<div class="a" style="left:777px;top:0;width:1px;height:23px;background:#94b2b2"></div>
<div class="a" style="left:778px;top:0;width:1px;height:23px;background:#fff"></div>
<div class="a" style="left:854px;top:0;width:3px;height:23px;background:linear-gradient(90deg,rgba(0,0,0,0),rgba(0,0,0,0.09))"></div>
<div class="a" style="left:857px;top:0;width:1px;height:23px;background:#94b2b2"></div>
<div class="a" style="left:858px;top:0;width:1px;height:23px;background:#fff"></div>
<div class="a" style="left:954px;top:0;width:3px;height:23px;background:linear-gradient(90deg,rgba(0,0,0,0),rgba(0,0,0,0.09))"></div>
<div class="a" style="left:957px;top:0;width:1px;height:23px;background:#94b2b2"></div>
<div class="a" style="left:958px;top:0;width:1px;height:23px;background:#fff"></div>
<div class="a" style="left:1034px;top:0;width:3px;height:23px;background:linear-gradient(90deg,rgba(0,0,0,0),rgba(0,0,0,0.09))"></div>
<div class="a" style="left:1037px;top:0;width:1px;height:23px;background:#94b2b2"></div>
<div class="a" style="left:1038px;top:0;width:1px;height:23px;background:#fff"></div>
<div class="a" style="left:0px;top:0;width:137px;height:24px;overflow:hidden"><div class="t" style="left:5.5px;top:6.89px;font-size:11px;transform:scaleY(1.1);transform-origin:0 9.31px">Payment Mode</div></div>
<div class="a" style="left:138px;top:0;width:69px;height:24px;overflow:hidden"><div class="t" style="left:5.5px;top:6.89px;font-size:11px;transform:scaleY(1.1);transform-origin:0 9.31px">Account No</div></div>
<div class="a" style="left:208px;top:0;width:69px;height:24px;overflow:hidden"><div class="t" style="left:5.5px;top:6.89px;font-size:11px;transform:scaleY(1.1);transform-origin:0 9.31px">Auxiliary</div></div>
<div class="a" style="left:278px;top:0;width:49px;height:24px;overflow:hidden"><div class="t" style="left:5.5px;top:6.89px;font-size:11px;transform:scaleY(1.1);transform-origin:0 9.31px">Curr</div></div>
<div class="a" style="left:328px;top:0;width:79px;height:24px;overflow:hidden"><div class="t" style="left:5.5px;top:6.89px;font-size:11px;transform:scaleY(1.1);transform-origin:0 9.31px">Amt</div></div>
<div class="a" style="left:408px;top:0;width:79px;height:24px;overflow:hidden"><div class="t" style="left:5.5px;top:6.89px;font-size:11px;transform:scaleY(1.1);transform-origin:0 9.31px">$</div></div>
<div class="a" style="left:488px;top:0;width:79px;height:24px;overflow:hidden"><div class="t" style="left:5.5px;top:6.89px;font-size:11px;transform:scaleY(1.1);transform-origin:0 9.31px">Eur</div></div>
<div class="a" style="left:568px;top:0;width:99px;height:24px;overflow:hidden"><div class="t" style="left:5.5px;top:6.89px;font-size:11px;transform:scaleY(1.1);transform-origin:0 9.31px">Bank</div></div>
<div class="a" style="left:668px;top:0;width:29px;height:24px;overflow:hidden"><div class="t" style="left:5.5px;top:6.89px;font-size:11px;transform:scaleY(1.1);transform-origin:0 9.31px">CC</div></div>
<div class="a" style="left:698px;top:0;width:79px;height:24px;overflow:hidden"><div class="t" style="left:5.5px;top:6.89px;font-size:11px;transform:scaleY(1.1);transform-origin:0 9.31px">Cheque No</div></div>
<div class="a" style="left:778px;top:0;width:79px;height:24px;overflow:hidden"><div class="t" style="left:5.5px;top:6.89px;font-size:11px;transform:scaleY(1.1);transform-origin:0 9.31px">Date</div></div>
<div class="a" style="left:858px;top:0;width:99px;height:24px;overflow:hidden"><div class="t" style="left:5.5px;top:6.89px;font-size:11px;transform:scaleY(1.1);transform-origin:0 9.31px">Branch</div></div>
<div class="a" style="left:958px;top:0;width:79px;height:24px;overflow:hidden"><div class="t" style="left:5.5px;top:6.89px;font-size:11px;transform:scaleY(1.1);transform-origin:0 9.31px">Division</div></div>
<div class="a" style="left:1038px;top:0;width:49px;height:24px;overflow:hidden"><div class="t" style="left:5.5px;top:6.89px;font-size:11px;transform:scaleY(1.1);transform-origin:0 9.31px">Project-Job</div></div>
</div>
<div class="a" style="left:77px;top:414px;width:37px;height:18px;background:linear-gradient(#ffffff 0%,#f7f7f7 10%,#f0f0f0 80%,#e4e4e4 100%);box-shadow:inset 0 -1px 0 #94b2b2, inset -2px 0 0 rgba(0,0,0,0.04)"></div>
<div class="a" style="left:77px;top:432px;width:37px;height:20px;background:linear-gradient(#ffffff 0%,#f7f7f7 10%,#f0f0f0 80%,#e4e4e4 100%);box-shadow:inset 0 -1px 0 #94b2b2, inset -2px 0 0 rgba(0,0,0,0.04)"></div>
<div class="t" style="left:82.5px;top:418.69px;font-size:11px;transform:scaleY(1.1);transform-origin:0 9.31px;">1</div>
<div class="t" style="left:82.5px;top:437.69px;font-size:11px;transform:scaleY(1.1);transform-origin:0 9.31px;">2</div>
<div class="a" style="left:114px;top:414px;width:1049px;height:18px;background:#0078d7"></div>
<svg style="left:106px;top:419px" width="5" height="9" viewBox="0 0 5 9"><path d="M0 0 L5 4.5 L0 9Z" fill="#000"/></svg>
<div class="a" style="left:114px;top:414px;width:1px;height:18px;background:repeating-linear-gradient(#d8e8f8 0 1px,transparent 1px 2px);background-position:0 0px"></div>
<div class="a" style="left:114px;top:432px;width:1px;height:20px;background:repeating-linear-gradient(#a0a0a0 0 1px,transparent 1px 2px);background-position:0 0px"></div>
<div class="a" style="left:214px;top:414px;width:1px;height:18px;background:repeating-linear-gradient(#d8e8f8 0 1px,transparent 1px 2px);background-position:0 0px"></div>
<div class="a" style="left:214px;top:432px;width:1px;height:20px;background:repeating-linear-gradient(#a0a0a0 0 1px,transparent 1px 2px);background-position:0 0px"></div>
<div class="a" style="left:284px;top:414px;width:1px;height:18px;background:repeating-linear-gradient(#d8e8f8 0 1px,transparent 1px 2px);background-position:0 0px"></div>
<div class="a" style="left:284px;top:432px;width:1px;height:20px;background:repeating-linear-gradient(#a0a0a0 0 1px,transparent 1px 2px);background-position:0 0px"></div>
<div class="a" style="left:354px;top:414px;width:1px;height:18px;background:repeating-linear-gradient(#d8e8f8 0 1px,transparent 1px 2px);background-position:0 0px"></div>
<div class="a" style="left:354px;top:432px;width:1px;height:20px;background:repeating-linear-gradient(#a0a0a0 0 1px,transparent 1px 2px);background-position:0 0px"></div>
<div class="a" style="left:404px;top:414px;width:1px;height:18px;background:repeating-linear-gradient(#d8e8f8 0 1px,transparent 1px 2px);background-position:0 0px"></div>
<div class="a" style="left:404px;top:432px;width:1px;height:20px;background:repeating-linear-gradient(#a0a0a0 0 1px,transparent 1px 2px);background-position:0 0px"></div>
<div class="a" style="left:484px;top:414px;width:1px;height:18px;background:repeating-linear-gradient(#d8e8f8 0 1px,transparent 1px 2px);background-position:0 0px"></div>
<div class="a" style="left:484px;top:432px;width:1px;height:20px;background:repeating-linear-gradient(#a0a0a0 0 1px,transparent 1px 2px);background-position:0 0px"></div>
<div class="a" style="left:564px;top:414px;width:1px;height:18px;background:repeating-linear-gradient(#d8e8f8 0 1px,transparent 1px 2px);background-position:0 0px"></div>
<div class="a" style="left:564px;top:432px;width:1px;height:20px;background:repeating-linear-gradient(#a0a0a0 0 1px,transparent 1px 2px);background-position:0 0px"></div>
<div class="a" style="left:644px;top:414px;width:1px;height:18px;background:repeating-linear-gradient(#d8e8f8 0 1px,transparent 1px 2px);background-position:0 0px"></div>
<div class="a" style="left:644px;top:432px;width:1px;height:20px;background:repeating-linear-gradient(#a0a0a0 0 1px,transparent 1px 2px);background-position:0 0px"></div>
<div class="a" style="left:744px;top:414px;width:1px;height:18px;background:repeating-linear-gradient(#d8e8f8 0 1px,transparent 1px 2px);background-position:0 0px"></div>
<div class="a" style="left:744px;top:432px;width:1px;height:20px;background:repeating-linear-gradient(#a0a0a0 0 1px,transparent 1px 2px);background-position:0 0px"></div>
<div class="a" style="left:774px;top:414px;width:1px;height:18px;background:repeating-linear-gradient(#d8e8f8 0 1px,transparent 1px 2px);background-position:0 0px"></div>
<div class="a" style="left:774px;top:432px;width:1px;height:20px;background:repeating-linear-gradient(#a0a0a0 0 1px,transparent 1px 2px);background-position:0 0px"></div>
<div class="a" style="left:854px;top:414px;width:1px;height:18px;background:repeating-linear-gradient(#d8e8f8 0 1px,transparent 1px 2px);background-position:0 0px"></div>
<div class="a" style="left:854px;top:432px;width:1px;height:20px;background:repeating-linear-gradient(#a0a0a0 0 1px,transparent 1px 2px);background-position:0 0px"></div>
<div class="a" style="left:934px;top:414px;width:1px;height:18px;background:repeating-linear-gradient(#d8e8f8 0 1px,transparent 1px 2px);background-position:0 0px"></div>
<div class="a" style="left:934px;top:432px;width:1px;height:20px;background:repeating-linear-gradient(#a0a0a0 0 1px,transparent 1px 2px);background-position:0 0px"></div>
<div class="a" style="left:1034px;top:414px;width:1px;height:18px;background:repeating-linear-gradient(#d8e8f8 0 1px,transparent 1px 2px);background-position:0 0px"></div>
<div class="a" style="left:1034px;top:432px;width:1px;height:20px;background:repeating-linear-gradient(#a0a0a0 0 1px,transparent 1px 2px);background-position:0 0px"></div>
<div class="a" style="left:1114px;top:414px;width:1px;height:18px;background:repeating-linear-gradient(#d8e8f8 0 1px,transparent 1px 2px);background-position:0 0px"></div>
<div class="a" style="left:1114px;top:432px;width:1px;height:20px;background:repeating-linear-gradient(#a0a0a0 0 1px,transparent 1px 2px);background-position:0 0px"></div>
<div class="a" style="left:114px;top:431px;width:1049px;height:1px;background:repeating-linear-gradient(90deg,#d8e8f8 0 1px,transparent 1px 2px)"></div>
<div class="a" style="left:114px;top:451px;width:1049px;height:1px;background:repeating-linear-gradient(90deg,#a0a0a0 0 1px,transparent 1px 2px)"></div>
<div class="t" style="left:118px;top:415.99px;font-size:11px;transform:scaleY(1.1);transform-origin:0 9.31px;color:#fff;">Cash $</div>
<div class="t" style="left:118px;top:434.99px;font-size:11px;transform:scaleY(1.1);transform-origin:0 9.31px;">Debit</div>
<div class="t" style="left:218px;top:415.99px;font-size:11px;transform:scaleY(1.1);transform-origin:0 9.31px;color:#fff;">53000002</div>
<div class="t" style="left:218px;top:434.99px;font-size:11px;transform:scaleY(1.1);transform-origin:0 9.31px;">51200006</div>
<div class="t" style="left:358px;top:415.99px;font-size:11px;transform:scaleY(1.1);transform-origin:0 9.31px;color:#fff;">$</div>
<div class="t" style="left:358px;top:434.99px;font-size:11px;transform:scaleY(1.1);transform-origin:0 9.31px;">$</div>
<div class="t" style="left:408px;top:415.99px;font-size:11px;transform:scaleY(1.1);transform-origin:0 9.31px;color:#fff;">10.000</div>
<div class="t" style="left:408px;top:434.99px;font-size:11px;transform:scaleY(1.1);transform-origin:0 9.31px;">10.000</div>
<div class="t" style="left:488px;top:415.99px;font-size:11px;transform:scaleY(1.1);transform-origin:0 9.31px;color:#fff;">10.000</div>
<div class="t" style="left:488px;top:434.99px;font-size:11px;transform:scaleY(1.1);transform-origin:0 9.31px;">10.000</div>
<div class="t" style="left:568px;top:415.99px;font-size:11px;transform:scaleY(1.1);transform-origin:0 9.31px;color:#fff;">11.110</div>
<div class="t" style="left:568px;top:434.99px;font-size:11px;transform:scaleY(1.1);transform-origin:0 9.31px;">11.110</div>
<div class="t" style="left:858px;top:415.99px;font-size:11px;transform:scaleY(1.1);transform-origin:0 9.31px;color:#fff;">25-Aug-23</div>
<div class="t" style="left:858px;top:434.99px;font-size:11px;transform:scaleY(1.1);transform-origin:0 9.31px;">25-Aug-23</div>
<div class="t" style="left:938px;top:415.99px;font-size:11px;transform:scaleY(1.1);transform-origin:0 9.31px;color:#fff;">Main</div>
<div class="t" style="left:938px;top:434.99px;font-size:11px;transform:scaleY(1.1);transform-origin:0 9.31px;">Main</div>
<div class="a" style="left:77px;top:460px;width:1086px;height:16px;background:#f0f0f0"></div>
<div class="a" style="left:94px;top:460px;width:836px;height:16px;background:#cdcdcd"></div>
<svg style="left:82px;top:464px" width="7" height="8" viewBox="0 0 7 8"><path d="M6.5 0 H3.8 L0 4 L3.8 8 H6.5 L2.7 4Z" fill="#505050"/></svg>
<svg style="left:1151px;top:464px" width="7" height="8" viewBox="0 0 7 8"><path d="M0.5 0 H3.2 L7 4 L3.2 8 H0.5 L4.3 4Z" fill="#505050"/></svg>
<div class="a" style="left:1081px;top:370px;width:83px;height:25px;background:#b9d1ea;box-shadow:inset 1px 1px 0 #dce8f4, inset -1px -1px 0 #000, inset -2px -2px 0 #3f5f86"></div>
<div class="t" style="left:1112px;top:376.69px;font-size:11px;">Add</div>
<div class="a" style="left:76px;top:488px;width:1088px;height:137px;background:#f0f0f0"></div>
<div class="a" style="left:76px;top:488px;width:1088px;height:1px;background:#fff"></div>
<div class="a" style="left:79px;top:490px;width:40px;height:19px;background:#f0f0f0;border-left:1px solid #fff;border-top:1px solid #fff"></div>
<div class="a" style="left:119px;top:488px;width:45px;height:21px;background:#f0f0f0;border-left:1px solid #fff;border-top:1px solid #fff;border-right:2px solid #696969"></div>
<div class="t" style="left:126.2px;top:491.84px;font-size:12px;">D</div>
<div class="a" style="left:76px;top:509px;width:1088px;height:116px;background:#f0f0f0;border-left:1px solid #fff;border-top:1px solid #fff;border-right:1px solid #7a7a7a;border-bottom:1px solid #7a7a7a;box-shadow:inset 0 -1px 0 #696969, inset -1px 0 0 #696969"></div>
<div class="a" style="left:120px;top:509px;width:42px;height:1px;background:#f0f0f0"></div>
<div class="a" style="left:306px;top:493px;width:100px;height:16px;background:#ababab"></div>
<div class="t" style="left:310px;top:494.08px;font-size:14.67px;color:#141414;font-weight:bold;">Total: 20.00 $</div>
<div class="a" style="left:515px;top:493px;width:115px;height:16px;background:#ababab"></div>
<div class="t" style="left:519.4px;top:494.08px;font-size:14.67px;color:#0c0cf4;font-weight:bold;">Total: 22.22 Eur</div>
<div class="a" style="left:720px;top:493px;width:114px;height:16px;background:#ababab"></div>
<div class="t" style="left:723.8px;top:494.08px;font-size:14.67px;color:#141414;font-weight:bold;">Balance: 0.00 $</div>
<div class="a" style="left:891px;top:493px;width:129px;height:16px;background:#ababab"></div>
<div class="t" style="left:894.8px;top:494.08px;font-size:14.67px;color:#0c0cf4;font-weight:bold;">Balance: 0.00 Eur</div>
<div class="a" style="left:82px;top:528px;width:1072px;height:86px;background:#fff;border:1px solid #bccddd"></div>
<div class="a" style="left:83px;top:529px;width:1070px;height:24px;overflow:hidden;background:linear-gradient(#ffffff 0%,#f6f6f6 55%,#ececec 90%,#e2e2e2 100%);box-shadow:inset 0 -1px 0 #94b2b2">
<div class="a" style="left:234px;top:0;width:3px;height:23px;background:linear-gradient(90deg,rgba(0,0,0,0),rgba(0,0,0,0.09))"></div>
<div class="a" style="left:237px;top:0;width:1px;height:23px;background:#94b2b2"></div>
<div class="a" style="left:238px;top:0;width:1px;height:23px;background:#fff"></div>
<div class="a" style="left:304px;top:0;width:3px;height:23px;background:linear-gradient(90deg,rgba(0,0,0,0),rgba(0,0,0,0.09))"></div>
<div class="a" style="left:307px;top:0;width:1px;height:23px;background:#94b2b2"></div>
<div class="a" style="left:308px;top:0;width:1px;height:23px;background:#fff"></div>
<div class="a" style="left:374px;top:0;width:3px;height:23px;background:linear-gradient(90deg,rgba(0,0,0,0),rgba(0,0,0,0.09))"></div>
<div class="a" style="left:377px;top:0;width:1px;height:23px;background:#94b2b2"></div>
<div class="a" style="left:378px;top:0;width:1px;height:23px;background:#fff"></div>
<div class="a" style="left:424px;top:0;width:3px;height:23px;background:linear-gradient(90deg,rgba(0,0,0,0),rgba(0,0,0,0.09))"></div>
<div class="a" style="left:427px;top:0;width:1px;height:23px;background:#94b2b2"></div>
<div class="a" style="left:428px;top:0;width:1px;height:23px;background:#fff"></div>
<div class="a" style="left:504px;top:0;width:3px;height:23px;background:linear-gradient(90deg,rgba(0,0,0,0),rgba(0,0,0,0.09))"></div>
<div class="a" style="left:507px;top:0;width:1px;height:23px;background:#94b2b2"></div>
<div class="a" style="left:508px;top:0;width:1px;height:23px;background:#fff"></div>
<div class="a" style="left:584px;top:0;width:3px;height:23px;background:linear-gradient(90deg,rgba(0,0,0,0),rgba(0,0,0,0.09))"></div>
<div class="a" style="left:587px;top:0;width:1px;height:23px;background:#94b2b2"></div>
<div class="a" style="left:588px;top:0;width:1px;height:23px;background:#fff"></div>
<div class="a" style="left:664px;top:0;width:3px;height:23px;background:linear-gradient(90deg,rgba(0,0,0,0),rgba(0,0,0,0.09))"></div>
<div class="a" style="left:667px;top:0;width:1px;height:23px;background:#94b2b2"></div>
<div class="a" style="left:668px;top:0;width:1px;height:23px;background:#fff"></div>
<div class="a" style="left:764px;top:0;width:3px;height:23px;background:linear-gradient(90deg,rgba(0,0,0,0),rgba(0,0,0,0.09))"></div>
<div class="a" style="left:767px;top:0;width:1px;height:23px;background:#94b2b2"></div>
<div class="a" style="left:768px;top:0;width:1px;height:23px;background:#fff"></div>
<div class="a" style="left:844px;top:0;width:3px;height:23px;background:linear-gradient(90deg,rgba(0,0,0,0),rgba(0,0,0,0.09))"></div>
<div class="a" style="left:847px;top:0;width:1px;height:23px;background:#94b2b2"></div>
<div class="a" style="left:848px;top:0;width:1px;height:23px;background:#fff"></div>
<div class="a" style="left:944px;top:0;width:3px;height:23px;background:linear-gradient(90deg,rgba(0,0,0,0),rgba(0,0,0,0.09))"></div>
<div class="a" style="left:947px;top:0;width:1px;height:23px;background:#94b2b2"></div>
<div class="a" style="left:948px;top:0;width:1px;height:23px;background:#fff"></div>
<div class="a" style="left:0px;top:0;width:237px;height:24px;overflow:hidden"><div class="t" style="left:5px;top:6.69px;font-size:11px;transform:scaleY(1.1);transform-origin:0 9.31px">Description</div></div>
<div class="a" style="left:238px;top:0;width:69px;height:24px;overflow:hidden"><div class="t" style="left:5.5px;top:6.69px;font-size:11px;transform:scaleY(1.1);transform-origin:0 9.31px">Account No</div></div>
<div class="a" style="left:308px;top:0;width:69px;height:24px;overflow:hidden"><div class="t" style="left:5.5px;top:6.69px;font-size:11px;transform:scaleY(1.1);transform-origin:0 9.31px">Auxiliary</div></div>
<div class="a" style="left:378px;top:0;width:49px;height:24px;overflow:hidden"><div class="t" style="left:5.5px;top:6.69px;font-size:11px;transform:scaleY(1.1);transform-origin:0 9.31px">Curr</div></div>
<div class="a" style="left:428px;top:0;width:79px;height:24px;overflow:hidden"><div class="t" style="left:5.5px;top:6.69px;font-size:11px;transform:scaleY(1.1);transform-origin:0 9.31px">Amt</div></div>
<div class="a" style="left:508px;top:0;width:79px;height:24px;overflow:hidden"><div class="t" style="left:5.5px;top:6.69px;font-size:11px;transform:scaleY(1.1);transform-origin:0 9.31px">$</div></div>
<div class="a" style="left:588px;top:0;width:79px;height:24px;overflow:hidden"><div class="t" style="left:5.5px;top:6.69px;font-size:11px;transform:scaleY(1.1);transform-origin:0 9.31px">Eur</div></div>
<div class="a" style="left:668px;top:0;width:99px;height:24px;overflow:hidden"><div class="t" style="left:5.5px;top:6.69px;font-size:11px;transform:scaleY(1.1);transform-origin:0 9.31px">Branch</div></div>
<div class="a" style="left:768px;top:0;width:79px;height:24px;overflow:hidden"><div class="t" style="left:5.5px;top:6.69px;font-size:11px;transform:scaleY(1.1);transform-origin:0 9.31px">Division</div></div>
<div class="a" style="left:848px;top:0;width:99px;height:24px;overflow:hidden"><div class="t" style="left:5.5px;top:6.69px;font-size:11px;transform:scaleY(1.1);transform-origin:0 9.31px">Project-Job</div></div>
<div class="a" style="left:948px;top:0;width:122px;height:24px;overflow:hidden"><div class="t" style="left:5.5px;top:6.69px;font-size:11px;transform:scaleY(1.1);transform-origin:0 9.31px">Note</div></div>
</div>
<div class="a" style="left:83px;top:553px;width:37px;height:19px;background:linear-gradient(#ffffff 0%,#f7f7f7 10%,#f0f0f0 80%,#e4e4e4 100%);box-shadow:inset 0 -1px 0 #94b2b2, inset -2px 0 0 rgba(0,0,0,0.04)"></div>
<div class="a" style="left:83px;top:572px;width:37px;height:19px;background:linear-gradient(#ffffff 0%,#f7f7f7 10%,#f0f0f0 80%,#e4e4e4 100%);box-shadow:inset 0 -1px 0 #94b2b2, inset -2px 0 0 rgba(0,0,0,0.04)"></div>
<div class="t" style="left:88.5px;top:557.69px;font-size:11px;transform:scaleY(1.1);transform-origin:0 9.31px;">1</div>
<div class="t" style="left:88.5px;top:576.69px;font-size:11px;transform:scaleY(1.1);transform-origin:0 9.31px;">2</div>
<div class="a" style="left:120px;top:553px;width:1033px;height:18px;background:#0078d7"></div>
<svg style="left:112px;top:558px" width="5" height="9" viewBox="0 0 5 9"><path d="M0 0 L5 4.5 L0 9Z" fill="#000"/></svg>
<div class="a" style="left:120px;top:553px;width:1px;height:18px;background:repeating-linear-gradient(#d8e8f8 0 1px,transparent 1px 2px);background-position:0 0px"></div>
<div class="a" style="left:120px;top:571px;width:1px;height:20px;background:repeating-linear-gradient(#a0a0a0 0 1px,transparent 1px 2px);background-position:0 0px"></div>
<div class="a" style="left:320px;top:553px;width:1px;height:18px;background:repeating-linear-gradient(#d8e8f8 0 1px,transparent 1px 2px);background-position:0 0px"></div>
<div class="a" style="left:320px;top:571px;width:1px;height:20px;background:repeating-linear-gradient(#a0a0a0 0 1px,transparent 1px 2px);background-position:0 0px"></div>
<div class="a" style="left:390px;top:553px;width:1px;height:18px;background:repeating-linear-gradient(#d8e8f8 0 1px,transparent 1px 2px);background-position:0 0px"></div>
<div class="a" style="left:390px;top:571px;width:1px;height:20px;background:repeating-linear-gradient(#a0a0a0 0 1px,transparent 1px 2px);background-position:0 0px"></div>
<div class="a" style="left:460px;top:553px;width:1px;height:18px;background:repeating-linear-gradient(#d8e8f8 0 1px,transparent 1px 2px);background-position:0 0px"></div>
<div class="a" style="left:460px;top:571px;width:1px;height:20px;background:repeating-linear-gradient(#a0a0a0 0 1px,transparent 1px 2px);background-position:0 0px"></div>
<div class="a" style="left:510px;top:553px;width:1px;height:18px;background:repeating-linear-gradient(#d8e8f8 0 1px,transparent 1px 2px);background-position:0 0px"></div>
<div class="a" style="left:510px;top:571px;width:1px;height:20px;background:repeating-linear-gradient(#a0a0a0 0 1px,transparent 1px 2px);background-position:0 0px"></div>
<div class="a" style="left:590px;top:553px;width:1px;height:18px;background:repeating-linear-gradient(#d8e8f8 0 1px,transparent 1px 2px);background-position:0 0px"></div>
<div class="a" style="left:590px;top:571px;width:1px;height:20px;background:repeating-linear-gradient(#a0a0a0 0 1px,transparent 1px 2px);background-position:0 0px"></div>
<div class="a" style="left:670px;top:553px;width:1px;height:18px;background:repeating-linear-gradient(#d8e8f8 0 1px,transparent 1px 2px);background-position:0 0px"></div>
<div class="a" style="left:670px;top:571px;width:1px;height:20px;background:repeating-linear-gradient(#a0a0a0 0 1px,transparent 1px 2px);background-position:0 0px"></div>
<div class="a" style="left:750px;top:553px;width:1px;height:18px;background:repeating-linear-gradient(#d8e8f8 0 1px,transparent 1px 2px);background-position:0 0px"></div>
<div class="a" style="left:750px;top:571px;width:1px;height:20px;background:repeating-linear-gradient(#a0a0a0 0 1px,transparent 1px 2px);background-position:0 0px"></div>
<div class="a" style="left:850px;top:553px;width:1px;height:18px;background:repeating-linear-gradient(#d8e8f8 0 1px,transparent 1px 2px);background-position:0 0px"></div>
<div class="a" style="left:850px;top:571px;width:1px;height:20px;background:repeating-linear-gradient(#a0a0a0 0 1px,transparent 1px 2px);background-position:0 0px"></div>
<div class="a" style="left:930px;top:553px;width:1px;height:18px;background:repeating-linear-gradient(#d8e8f8 0 1px,transparent 1px 2px);background-position:0 0px"></div>
<div class="a" style="left:930px;top:571px;width:1px;height:20px;background:repeating-linear-gradient(#a0a0a0 0 1px,transparent 1px 2px);background-position:0 0px"></div>
<div class="a" style="left:1030px;top:553px;width:1px;height:18px;background:repeating-linear-gradient(#d8e8f8 0 1px,transparent 1px 2px);background-position:0 0px"></div>
<div class="a" style="left:1030px;top:571px;width:1px;height:20px;background:repeating-linear-gradient(#a0a0a0 0 1px,transparent 1px 2px);background-position:0 0px"></div>
<div class="a" style="left:120px;top:570px;width:1033px;height:1px;background:repeating-linear-gradient(90deg,#d8e8f8 0 1px,transparent 1px 2px)"></div>
<div class="a" style="left:120px;top:590px;width:1033px;height:1px;background:repeating-linear-gradient(90deg,#a0a0a0 0 1px,transparent 1px 2px)"></div>
<div class="t" style="left:124.5px;top:554.69px;font-size:11px;transform:scaleY(1.1);transform-origin:0 9.31px;color:#fff;">Description</div>
<div class="t" style="left:124.5px;top:573.69px;font-size:11px;transform:scaleY(1.1);transform-origin:0 9.31px;">Description</div>
<div class="t" style="left:464.5px;top:554.69px;font-size:11px;transform:scaleY(1.1);transform-origin:0 9.31px;color:#fff;">$</div>
<div class="t" style="left:464.5px;top:573.69px;font-size:11px;transform:scaleY(1.1);transform-origin:0 9.31px;">$</div>
<div class="t" style="left:514.5px;top:554.69px;font-size:11px;transform:scaleY(1.1);transform-origin:0 9.31px;color:#fff;">10.000</div>
<div class="t" style="left:514.5px;top:573.69px;font-size:11px;transform:scaleY(1.1);transform-origin:0 9.31px;">10.000</div>
<div class="t" style="left:594.5px;top:554.69px;font-size:11px;transform:scaleY(1.1);transform-origin:0 9.31px;color:#fff;">10.000</div>
<div class="t" style="left:594.5px;top:573.69px;font-size:11px;transform:scaleY(1.1);transform-origin:0 9.31px;">10.000</div>
<div class="t" style="left:674.5px;top:554.69px;font-size:11px;transform:scaleY(1.1);transform-origin:0 9.31px;color:#fff;">11.110</div>
<div class="t" style="left:674.5px;top:573.69px;font-size:11px;transform:scaleY(1.1);transform-origin:0 9.31px;">11.110</div>
<div class="t" style="left:754.5px;top:554.69px;font-size:11px;transform:scaleY(1.1);transform-origin:0 9.31px;color:#fff;">Main</div>
<div class="t" style="left:754.5px;top:573.69px;font-size:11px;transform:scaleY(1.1);transform-origin:0 9.31px;">Main</div>
<div class="a" style="left:83px;top:597px;width:1070px;height:16px;background:#f0f0f0"></div>
<div class="a" style="left:100px;top:597px;width:818px;height:16px;background:#cdcdcd"></div>
<svg style="left:88px;top:601px" width="7" height="8" viewBox="0 0 7 8"><path d="M6.5 0 H3.8 L0 4 L3.8 8 H6.5 L2.7 4Z" fill="#505050"/></svg>
<svg style="left:1141px;top:601px" width="7" height="8" viewBox="0 0 7 8"><path d="M0.5 0 H3.2 L7 4 L3.2 8 H0.5 L4.3 4Z" fill="#505050"/></svg>
<div class="a" style="left:1052px;top:510px;width:83px;height:22px;background:#ffffc0;box-shadow:inset 1px 1px 0 #ffffe8, inset -1px -1px 0 #000, inset -2px -2px 0 #808000"></div>
<div class="t" style="left:1083px;top:515.19px;font-size:11px;">Add</div></body></html>
